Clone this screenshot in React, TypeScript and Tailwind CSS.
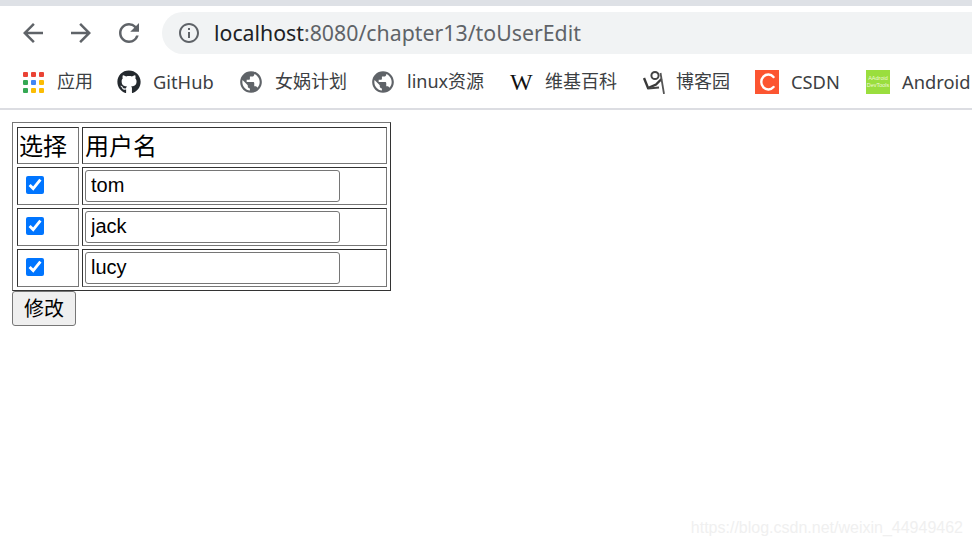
import React from 'react';
import { FaGithub } from 'react-icons/fa';
import { MdArrowBack, MdArrowForward, MdRefresh, MdInfoOutline, MdPublic } from 'react-icons/md';

const AppsIcon = () => {
  const colors = ['#ea4335', '#ea4335', '#ea4335', '#34a853', '#4285f4', '#fbbc04', '#34a853', '#fbbc04', '#fbbc04'];
  return (
    <div className="grid grid-cols-[repeat(3,5px)] gap-[3px] w-5 h-5">
      {colors.map((c, i) => (
        <span key={i} className="w-[5px] h-[5px] rounded-[1px]" style={{ backgroundColor: c }} />
      ))}
    </div>
  );
};

const CnblogsIcon = () => (
  <svg width="22" height="24" viewBox="0 0 22 24" fill="none">
    <circle cx="12" cy="5.5" r="3.6" stroke="#444" strokeWidth="2" />
    <path d="M1 8 L5 18 L13 14.5 L18.5 9" stroke="#3a3a3a" strokeWidth="2.4" />
    <path d="M5 18.5 L16 17.5" stroke="#444" strokeWidth="2" />
    <path d="M17.5 3 L21 24" stroke="#555" strokeWidth="1.8" />
  </svg>
);

const CsdnIcon = () => (
  <span className="w-6 h-6 mr-3 bg-[#fc5531] flex items-center justify-center">
    <svg width="16" height="18" viewBox="0 0 16 18" fill="none">
      <path d="M14.5 4 A7 7.5 0 1 0 14.5 14" stroke="#fff" strokeWidth="2.4" strokeLinecap="round" />
    </svg>
  </span>
);

const Bookmark = ({ icon, label, className }: { icon: React.ReactNode; label: string; className: string }) => (
  <div className={`flex items-center shrink-0 ${className}`}>
    {icon}
    <span className="whitespace-nowrap">{label}</span>
  </div>
);

const users = ['tom', 'jack', 'lucy'];

export default function App() {
  return (
    <div className="w-[972px] h-[546px] overflow-hidden bg-white relative font-['Liberation_Sans',sans-serif]">
      <div className="h-[6px] bg-[#dee1e6]" />

      <div className="h-[54px] flex items-center pl-[18px]">
        <MdArrowBack size={30} color="#5f6368" />
        <MdArrowForward size={30} color="#5f6368" className="ml-[18px]" />
        <MdRefresh size={30} color="#5f6368" className="ml-[18px]" />
        <div className="ml-[18px] flex-1 h-[42px] rounded-l-[21px] bg-[#f1f3f4] flex items-center pl-[15px]">
          <MdInfoOutline size={24} color="#5f6368" />
          <div className="ml-[13px] text-[21.3px] font-['Noto_Sans',sans-serif] text-[#5f6368] whitespace-nowrap">
            <span className="text-[#202124]">localhost</span>:8080/chapter13/toUserEdit
          </div>
        </div>
      </div>

      <div className="h-[50px] flex items-center pl-[23px] pb-[5px] border-b-2 border-[#dcdde2] text-[18.3px] text-[#3c4043] font-['Noto_Sans','Noto_Sans_CJK_SC',sans-serif]">
        <Bookmark className="w-[94px] text-[18px]" icon={<span className="mr-[14px]"><AppsIcon /></span>} label="应用" />
        <Bookmark className="w-[123px]" icon={<FaGithub size={24} color="#24292e" className="mr-[12px]" />} label="GitHub" />
        <Bookmark className="w-[132px] text-[18px]" icon={<MdPublic size={26} color="#5f6368" className="-ml-[2px] mr-[11px]" />} label="女娲计划" />
        <Bookmark className="w-[138px] text-[18px]" icon={<MdPublic size={26} color="#5f6368" className="-ml-[2px] mr-[11px]" />} label="linux资源" />
        <Bookmark className="w-[133px] text-[18px]" icon={<span className="font-['Liberation_Serif',serif] text-[24px] leading-none text-[#111] w-[35px]">W</span>} label="维基百科" />
        <Bookmark className="w-[112px] text-[18px]" icon={<span className="mr-[11px] flex"><CnblogsIcon /></span>} label="博客园" />
        <Bookmark className="w-[111px]" icon={<CsdnIcon />} label="CSDN" />
        <Bookmark
          className="w-[120px]"
          icon={
            <span className="w-6 h-6 mr-3 bg-[#9ade3e] text-[#eef8dc] flex flex-col items-center justify-center text-[5.5px] leading-[7px] font-['Liberation_Sans',sans-serif]">
              <span>AAdroid</span>
              <span>DevTools</span>
            </span>
          }
          label="Android"
        />
      </div>

      <div className="pt-[12px] pl-[12px] text-black">
        <table className="border-separate border-spacing-[3px] border border-t-[#767676] border-l-[#767676] border-r-[#333] border-b-[#333] pt-[1px] pl-[1px] w-[379px]">
          <thead>
            <tr>
              <th className="w-[62px] h-[37px] p-0 pl-[1px] pt-[3px] text-left font-normal text-[24px] leading-none font-['Liberation_Sans','Noto_Sans_CJK_SC',sans-serif] border border-t-[#333] border-l-[#333] border-r-[#767676] border-b-[#767676]">
                选择
              </th>
              <th className="p-0 pl-[2px] pt-[3px] text-left font-normal text-[24px] leading-none font-['Liberation_Sans','Noto_Sans_CJK_SC',sans-serif] border border-t-[#333] border-l-[#333] border-r-[#767676] border-b-[#767676]">
                用户名
              </th>
            </tr>
          </thead>
          <tbody>
            {users.map((u) => (
              <tr key={u}>
                <td className="h-[38px] p-0 border border-t-[#333] border-l-[#333] border-r-[#767676] border-b-[#767676]">
                  <div className="flex pl-[8px] mb-[2px]">
                    <input type="checkbox" defaultChecked className="w-[18px] h-[18px] m-0" />
                  </div>
                </td>
                <td className="p-0 pl-[2px] border border-t-[#333] border-l-[#333] border-r-[#767676] border-b-[#767676]">
                  <div className="flex">
                    <input
                      type="text"
                      defaultValue={u}
                      className="w-[255px] h-[32px] px-[5px] pb-[2px] text-[20px] text-black border border-[#767676] rounded-[3px] bg-white outline-none"
                    />
                  </div>
                </td>
              </tr>
            ))}
          </tbody>
        </table>
        <button className="w-[64px] h-[35px] bg-[#efefef] border border-[#767676] rounded-[3px] text-[20px] leading-none font-['Liberation_Sans','Noto_Sans_CJK_SC',sans-serif] block">
          修改
        </button>
      </div>

      <div className="absolute right-[9px] bottom-[8px] text-[16px] leading-5 text-[#f0f0f0] whitespace-nowrap">
        https://blog.csdn.net/weixin_44949462
      </div>
    </div>
  );
}
